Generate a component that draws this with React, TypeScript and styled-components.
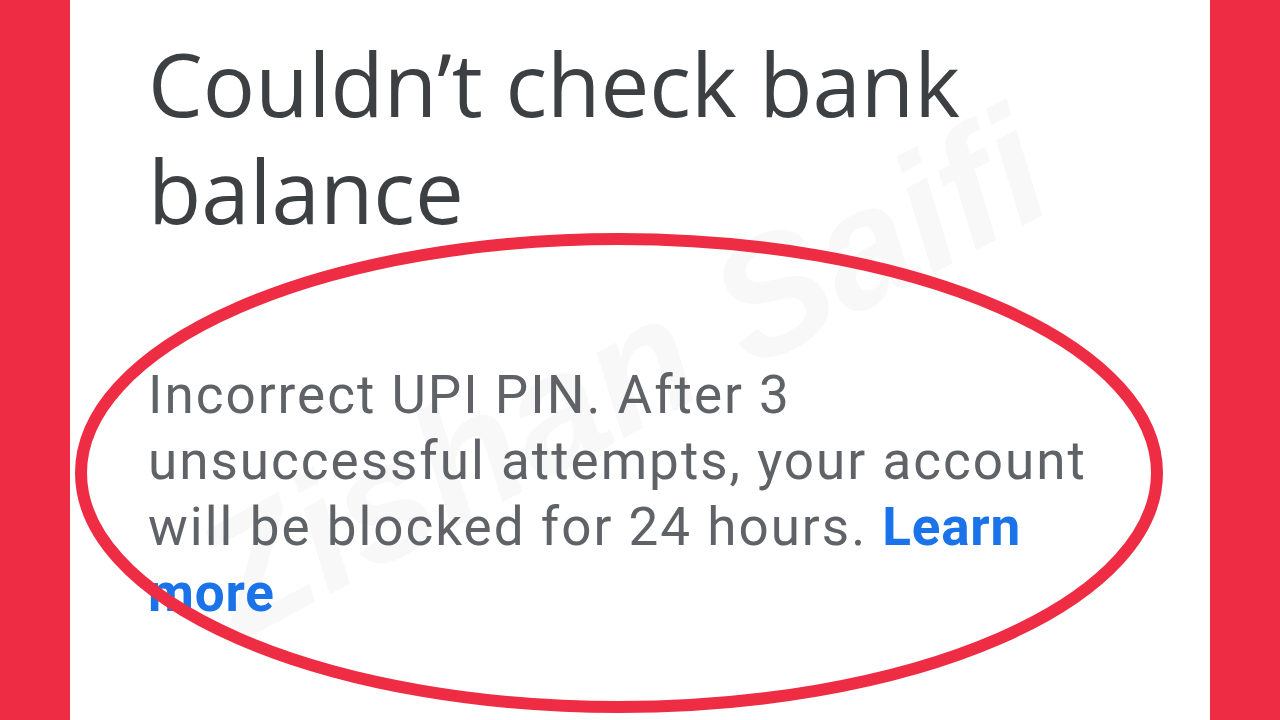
import React from 'react'
import styled, { createGlobalStyle } from 'styled-components'

const GlobalStyle = createGlobalStyle`
  html, body {
    margin: 0;
    padding: 0;
    background: #ffffff;
  }
  #root {
    width: 1280px;
    height: 720px;
  }
`

const Frame = styled.div`
  position: relative;
  width: 1280px;
  height: 720px;
  display: flex;
  flex-direction: row;
  overflow: hidden;
  background: #ffffff;
`

const SideBar = styled.div`
  width: 70px;
  flex: 0 0 70px;
  background: #ee2c44;
`

const Screen = styled.div`
  position: relative;
  flex: 1;
  background: #ffffff;
  padding: 30px 0 0 78px;
  box-sizing: border-box;
  display: flex;
  flex-direction: column;
`

const Title = styled.h1`
  margin: 0;
  font-family: 'Open Sans', 'Liberation Sans', sans-serif;
  font-weight: 400;
  font-size: 87px;
  line-height: 107px;
  letter-spacing: 0;
  color: #3c4043;
  width: 900px;
  position: relative;
  z-index: 1;
`

const Message = styled.p`
  margin: 118px 0 0 0;
  font-family: Roboto, 'Liberation Sans', sans-serif;
  font-weight: 400;
  font-size: 53px;
  line-height: 66px;
  letter-spacing: 2px;
  color: #5f6368;
  width: 985px;
  position: relative;
  z-index: 1;
`

const LearnLink = styled.a`
  color: #1a73e8;
  font-weight: 700;
  letter-spacing: 0.8px;
  text-decoration: none;
`

const Watermark = styled.div`
  position: absolute;
  left: 180px;
  top: 500px;
  font-family: 'Liberation Sans', Arial, sans-serif;
  font-weight: 700;
  font-style: italic;
  font-size: 166px;
  line-height: 166px;
  color: #f8f8f8;
  white-space: nowrap;
  transform: rotate(-28deg);
  transform-origin: 0 100%;
  z-index: 0;
  pointer-events: none;
`

const Overlay = styled.svg`
  position: absolute;
  left: 0;
  top: 0;
  width: 1280px;
  height: 720px;
  pointer-events: none;
  z-index: 2;
`

export default function App() {
  return (
    <>
      <GlobalStyle />
      <Frame>
        <SideBar />
        <Screen>
          <Watermark>Zishan Saifi</Watermark>
          <Title>Couldn’t check bank balance</Title>
          <Message>
            Incorrect UPI PIN. After 3 unsuccessful attempts, your account will be blocked for 24 hours.{' '}
            <LearnLink href="#">Learn more</LearnLink>
          </Message>
        </Screen>
        <SideBar />
        <Overlay viewBox="0 0 1280 720">
          <ellipse cx="619" cy="473" rx="538" ry="234" fill="none" stroke="#ee2c44" strokeWidth="12" />
        </Overlay>
      </Frame>
    </>
  )
}
